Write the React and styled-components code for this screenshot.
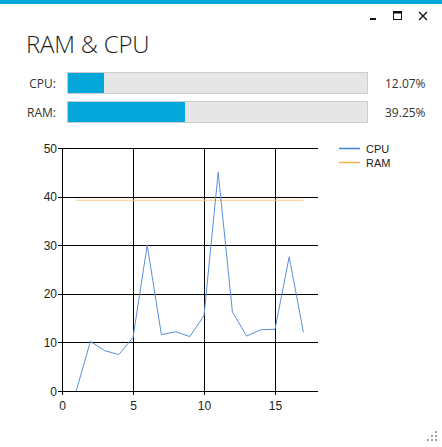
import React from 'react';
import styled, { createGlobalStyle } from 'styled-components';

const GlobalStyle = createGlobalStyle`
  html, body {
    margin: 0;
    padding: 0;
    background: #ffffff;
  }
  body {
    font-family: "Open Sans", "Liberation Sans", sans-serif;
    color: #222;
  }
`;

const accent = '#04a7d9';

const Window = styled.div`
  position: relative;
  width: 442px;
  height: 447px;
  overflow: hidden;
  background: #fff;
  border-top: 4px solid ${accent};
  box-sizing: border-box;
`;

const Controls = styled.div`
  display: flex;
  justify-content: flex-end;
  align-items: center;
  gap: 15px;
  height: 24px;
  padding-right: 14px;
`;

const ControlButton = styled.div`
  width: 10px;
  height: 10px;
  display: flex;
  align-items: center;
  justify-content: center;
`;

const Title = styled.h1`
  margin: 0 0 0 26px;
  font-size: 24px;
  font-weight: 300;
  line-height: 32px;
  color: #1e1e1e;
  letter-spacing: -0.2px;
`;

const Meters = styled.div`
  display: grid;
  grid-template-columns: 67px 301px 1fr;
  grid-auto-rows: 22px;
  row-gap: 7px;
  margin-top: 12px;
  align-items: center;
`;

const MeterLabel = styled.span`
  font-size: 12px;
  color: #333;
  text-align: right;
  padding-right: 11px;
`;

const Track = styled.div`
  height: 22px;
  box-sizing: border-box;
  background: #e6e6e6;
  border: 1px solid #cdcdcd;
  display: flex;
`;

const Fill = styled.div`
  height: 100%;
  background: ${accent};
`;

const Percent = styled.span`
  font-size: 12px;
  color: #333;
  padding-left: 17px;
`;

const ChartArea = styled.div`
  margin-top: 17px;
  display: flex;
`;

const Grip = styled.svg`
  position: absolute;
  right: 4px;
  bottom: 5px;
`;

const cpu = [
  [1, 0], [2, 10.2], [3, 8.3], [4, 7.5], [5, 11], [6, 30], [7, 11.6], [8, 12.2],
  [9, 11.2], [10, 15.5], [11, 45], [12, 16.3], [13, 11.3], [14, 12.6], [15, 12.7],
  [16, 27.6], [17, 12.1],
];

const meters = [
  { name: 'CPU:', value: 12.07 },
  { name: 'RAM:', value: 39.25 },
];

// chart geometry in svg coords (svg top = page y 140)
const X0 = 62;
const Y0 = 251;
const sx = (v) => X0 + v * 14.2;
const sy = (v) => Y0 - v * 4.86;

const Chart = () => {
  const gridX = [5, 10, 15];
  const gridY = [10, 20, 30, 40, 50];
  const pts = cpu.map(([x, y]) => `${sx(x)},${sy(y)}`).join(' ');
  return (
    <svg width="442" height="280" style={{ display: 'block' }}>
      {gridX.map((g) => (
        <line key={g} x1={sx(g) + 0.5} x2={sx(g) + 0.5} y1={sy(50)} y2={Y0 + 4} stroke="#000" strokeWidth="1" />
      ))}
      {gridY.map((g) => (
        <line key={g} x1={X0 - 4} x2={318} y1={Math.round(sy(g)) + 0.5} y2={Math.round(sy(g)) + 0.5} stroke="#000" strokeWidth="1" />
      ))}
      <line x1={X0 + 0.5} x2={X0 + 0.5} y1={sy(50)} y2={Y0 + 4} stroke="#000" />
      <line x1={X0 - 4} x2={318} y1={Y0 + 0.5} y2={Y0 + 0.5} stroke="#000" />
      <line x1={X0 + 0.5} x2={X0 + 0.5} y1={Y0} y2={Y0 + 4} stroke="#000" />
      <line x1={sx(1)} x2={sx(17)} y1={sy(39.25)} y2={sy(39.25)} stroke="#f7c48a" strokeWidth="1.2" />
      <polyline points={pts} fill="none" stroke="#5b8fdc" strokeWidth="1" />
      <g fontFamily="Liberation Sans, Arial, sans-serif" fontSize="12" fill="#222">
        {[0, 10, 20, 30, 40, 50].map((v) => (
          <text key={v} x={X0 - 5} y={sy(v) + 4.5} textAnchor="end">{v}</text>
        ))}
        {[0, 5, 10, 15].map((v) => (
          <text key={v} x={sx(v) + 0.5} y={Y0 + 19} textAnchor="middle">{v}</text>
        ))}
      </g>
      <g fontFamily="Liberation Sans, Arial, sans-serif" fontSize="11" fill="#222">
        <line x1="339" x2="360" y1="8.5" y2="8.5" stroke="#3a86e0" strokeWidth="1.5" />
        <text x="366" y="12.5">CPU</text>
        <line x1="339" x2="360" y1="22.5" y2="22.5" stroke="#f6b24a" strokeWidth="1.5" />
        <text x="366" y="27">RAM</text>
      </g>
    </svg>
  );
};

export default function App() {
  return (
    <>
      <GlobalStyle />
      <Window>
        <Controls>
          <ControlButton>
            <svg width="8" height="10"><rect x="1" y="7" width="6" height="2" fill="#111" /></svg>
          </ControlButton>
          <ControlButton>
            <svg width="10" height="10"><rect x="0.5" y="0.5" width="8" height="8" fill="none" stroke="#111" /><rect x="0.5" y="0.5" width="8" height="2" fill="#111" /></svg>
          </ControlButton>
          <ControlButton>
            <svg width="10" height="10"><path d="M1 1 L9 9 M9 1 L1 9" stroke="#111" strokeWidth="1.3" /></svg>
          </ControlButton>
        </Controls>
        <Title>RAM &amp; CPU</Title>
        <Meters>
          {meters.map((m) => (
            <React.Fragment key={m.name}>
              <MeterLabel>{m.name}</MeterLabel>
              <Track>
                <Fill style={{ width: `${m.value}%` }} />
              </Track>
              <Percent>{m.value.toFixed(2)}%</Percent>
            </React.Fragment>
          ))}
        </Meters>
        <ChartArea>
          <Chart />
        </ChartArea>
        <Grip width="12" height="12">
          {[[9, 1], [9, 5], [5, 5], [9, 9], [5, 9], [1, 9]].map(([x, y]) => (
            <rect key={`${x}-${y}`} x={x} y={y} width="2" height="2" fill="#a0a0a0" />
          ))}
        </Grip>
      </Window>
    </>
  );
}
